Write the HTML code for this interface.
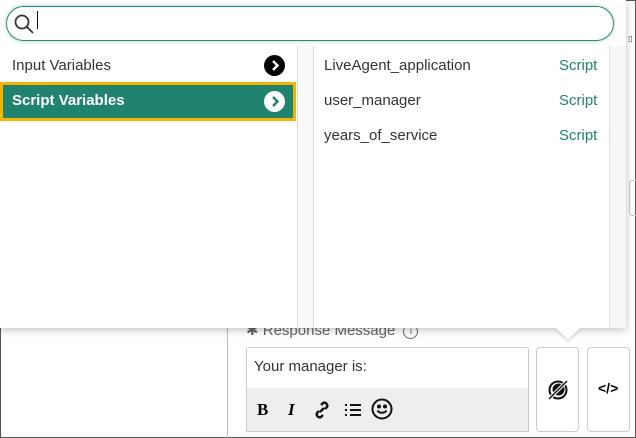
<!DOCTYPE html>
<html><head><style>
body{margin:0;width:636px;height:438px;position:relative;overflow:hidden;background:#fff;font-family:"Liberation Sans",sans-serif;}
.frame{position:absolute;left:0;top:0;width:634px;height:436px;border:1px solid #555;}
.bg-line{position:absolute;left:227px;top:320px;width:1px;height:118px;background:#bbb;}
.popup{position:absolute;left:0;top:0;width:626px;height:328px;background:#fff;box-shadow:0 2px 8px rgba(0,0,0,.25);}
.search{position:absolute;left:6px;top:6px;width:606px;height:33px;border:1.5px solid #2b8a78;border-radius:18px;box-shadow:0 0 4px rgba(43,138,120,.4);}
.cursor{position:absolute;left:37px;top:11px;width:1px;height:18px;background:#111;}
.item{position:absolute;font-size:15px;color:#333;}
.sel{position:absolute;left:0;top:82px;width:290px;height:33px;background:#20836f;border:3px solid #f5b400;}
.chev{position:absolute;width:21px;height:21px;border-radius:50%;}
.divider{position:absolute;left:297px;top:46px;width:15px;height:282px;background:#fafafa;border-left:1px solid #ddd;border-right:1px solid #ddd;}
.rdiv{position:absolute;left:609px;top:46px;width:16px;height:282px;background:#f7f7f7;border-left:1px solid #ddd;}
.script{position:absolute;left:559px;font-size:15px;color:#20836f;}
.ta{position:absolute;left:246px;top:347px;width:281px;height:41px;border:1px solid #ccc;border-radius:3px 3px 0 0;font-size:15px;color:#333;}
.tb{position:absolute;left:246px;top:388px;width:281px;height:43px;background:#eceeef;border:1px solid #ccc;border-top:none;}
.btn{position:absolute;top:347px;width:41px;height:83px;border:1px solid #ccc;border-radius:4px;background:#fff;}
</style></head><body>
<div class="frame"></div>
<div class="bg-line"></div>
<div style="position:absolute;left:628px;top:35px;width:8px;height:10px;font-size:8px">⁞⁞</div>
<div style="position:absolute;left:629px;top:180px;width:6px;height:34px;border:1px solid #ccc;border-right:none;border-radius:3px 0 0 3px"></div>
<div style="position:absolute;left:246px;top:321px;font-size:15px;color:#666">✱ Response Message <span style="display:inline-block;width:13px;height:13px;border:1px solid #666;border-radius:50%;font-size:10px;text-align:center;line-height:13px;vertical-align:1px;margin-left:4px">i</span></div>
<div class="ta"><span style="position:absolute;left:7px;top:10px">Your manager is:</span></div>
<div class="tb">
<span style="position:absolute;left:10px;top:12px;font:bold 17px 'Liberation Serif',serif">B</span>
<span style="position:absolute;left:41px;top:12px;font:italic bold 17px 'Liberation Serif',serif">I</span>
<svg style="position:absolute;left:66px;top:13px" width="18" height="18" viewBox="0 0 18 18" fill="none" stroke="#111" stroke-width="2.4"><path d="M8 4l2-2a3 3 0 014 4l-2 2M10 14l-2 2a3 3 0 01-4-4l2-2M7 11l4-4"/></svg>
<svg style="position:absolute;left:97px;top:14px" width="18" height="16" viewBox="0 0 18 16" stroke="#111" stroke-width="2"><path d="M1 3h2M6 3h11M1 8h2M6 8h11M1 13h2M6 13h11"/></svg>
<svg style="position:absolute;left:124px;top:10px" width="22" height="22" viewBox="0 0 22 22" fill="none" stroke="#111" stroke-width="2"><circle cx="11" cy="11" r="9.5"/><path d="M6.5 12.5a5 4 0 009 0"/><circle cx="8" cy="8.5" r="1" fill="#111"/><circle cx="14" cy="8.5" r="1" fill="#111"/></svg>
</div>
<div class="btn" style="left:536px"><svg style="position:absolute;left:9px;top:30px" width="24" height="24" viewBox="0 0 24 24"><circle cx="12" cy="12" r="8.5" fill="none" stroke="#111" stroke-width="2"/><circle cx="12.5" cy="11.5" r="6" fill="#111"/><path d="M2 22L22 2" stroke="#fff" stroke-width="3.5"/><path d="M3 21L21 3" stroke="#111" stroke-width="1.4"/></svg></div>
<div class="btn" style="left:587px"><span style="position:absolute;left:10px;top:32px;font:bold 14px 'Liberation Sans',sans-serif">&lt;/&gt;</span></div>
<div class="popup">
<div class="search"></div>
<svg style="position:absolute;left:13px;top:13px" width="22" height="22" viewBox="0 0 22 22" fill="none" stroke="#333" stroke-width="1.8"><circle cx="9" cy="9" r="6.5"/><path d="M14 14l6 6"/></svg>
<div class="cursor"></div>
<div class="divider"></div>
<div class="rdiv"></div>
<div class="item" style="left:12px;top:57px">Input Variables</div>
<div class="chev" style="left:264px;top:55px;background:#000"><svg width="21" height="21" viewBox="0 0 21 21"><path d="M9 6l4.5 4.5L9 15" fill="none" stroke="#fff" stroke-width="2.4"/></svg></div>
<div class="sel"></div>
<div class="item" style="left:12px;top:92px;color:#fff;font-weight:600;font-size:15px">Script Variables</div>
<div class="chev" style="left:264px;top:91px;background:#fff"><svg width="21" height="21" viewBox="0 0 21 21"><path d="M9 6l4.5 4.5L9 15" fill="none" stroke="#20836f" stroke-width="2.4"/></svg></div>
<div class="item" style="left:324px;top:57px">LiveAgent_application</div>
<div class="item" style="left:324px;top:92px">user_manager</div>
<div class="item" style="left:324px;top:127px">years_of_service</div>
<div class="script" style="top:57px">Script</div>
<div class="script" style="top:92px">Script</div>
<div class="script" style="top:127px">Script</div>
</div>
<div style="position:absolute;left:556px;top:328px;width:0;height:0;border-left:12px solid transparent;border-right:12px solid transparent;border-top:12px solid #fff;filter:drop-shadow(0 2px 1px rgba(0,0,0,.15))"></div>
</body></html>
